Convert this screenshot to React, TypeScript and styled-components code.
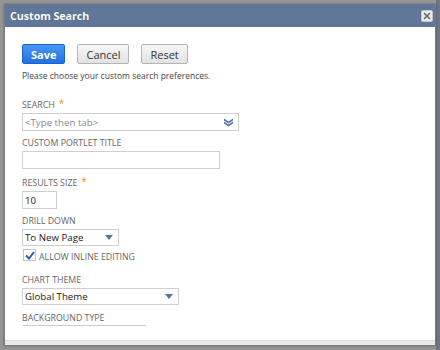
import styled, { createGlobalStyle } from "styled-components";

const GlobalStyle = createGlobalStyle`
  html, body {
    margin: 0;
    padding: 0;
    background: #8d8d8d;
    font-family: "Open Sans", "Liberation Sans", sans-serif;
  }
  * {
    box-sizing: border-box;
  }
`;

const Backdrop = styled.div`
  width: 440px;
  height: 350px;
  padding: 4px;
  background: linear-gradient(to right, #959595 0, #959595 436px, #6f7584 436px);
`;

const Dialog = styled.div`
  width: 432px;
  height: 342px;
  background: #ffffff;
  border: 1px solid #7d7d7d;
  border-top: none;
  display: flex;
  flex-direction: column;
  box-shadow: 0 0 2px rgba(0, 0, 0, 0.35);
`;

const TitleBar = styled.div`
  height: 23px;
  flex: none;
  background: #607799;
  display: flex;
  align-items: center;
  justify-content: space-between;
  padding: 0 2px 0 5px;
`;

const Title = styled.h1`
  margin: 0;
  font-size: 10.8px;
  font-weight: 700;
  color: #ffffff;
  letter-spacing: -0.1px;
  text-shadow: 0 0 1px rgba(0, 0, 0, 0.4);
`;

const CloseButton = styled.button`
  width: 12px;
  height: 12px;
  padding: 0;
  border: 1px solid #c8c8c8;
  border-radius: 2px;
  background: #ececec;
  display: flex;
  align-items: center;
  justify-content: center;
`;

const Body = styled.div`
  flex: 1;
  padding: 17px 17px 0 17px;
  display: flex;
  flex-direction: column;
  align-items: flex-start;
`;

const Footer = styled.div`
  height: 5px;
  flex: none;
  background: #e9e9e9;
  border-top: 1px solid #dcdcdc;
`;

const ButtonRow = styled.div`
  display: flex;
  gap: 12px;
`;

const Button = styled.button<{ $primary?: boolean }>`
  height: 20px;
  padding: 0 8px;
  font-family: "Open Sans", "Liberation Sans", sans-serif;
  font-size: 11px;
  font-weight: ${(p) => (p.$primary ? 700 : 400)};
  color: ${(p) => (p.$primary ? "#ffffff" : "#333333")};
  border-radius: 2px;
  border: 1px solid ${(p) => (p.$primary ? "#1f63c8" : "#b4b4b4")};
  background: ${(p) =>
    p.$primary
      ? "linear-gradient(#4996f4, #1f72e4)"
      : "linear-gradient(#f7f7f7, #e2e2e2)"};
`;

const Intro = styled.p`
  margin: 6px 0 0 0;
  font-size: 8.5px;
  line-height: 12px;
  color: #444444;
`;

const Field = styled.div<{ $top: number }>`
  margin-top: ${(p) => p.$top}px;
  display: flex;
  flex-direction: column;
  align-items: flex-start;
`;

const Label = styled.label`
  font-size: 8.8px;
  color: #666666;
  text-transform: uppercase;
  line-height: 12px;
  height: 12px;
  margin-bottom: 2px;
  display: flex;
  align-items: flex-start;
`;

const Required = styled.span`
  color: #e49a1c;
  font-size: 10px;
  margin-left: 4px;
  line-height: 9px;
`;

const TextInput = styled.div<{ $width: number; $height?: number }>`
  width: ${(p) => p.$width}px;
  height: ${(p) => p.$height ?? 18}px;
  border: 1px solid #cfcfcf;
  background: #ffffff;
  display: flex;
  align-items: center;
  justify-content: space-between;
  padding: 0 5px 0 2px;
  font-size: 9.7px;
  color: #222222;
`;

const Placeholder = styled.span`
  color: #8a8a8a;
`;

const CheckRow = styled.div`
  margin-top: 3px;
  height: 12px;
  display: flex;
  align-items: center;
  gap: 3px;
  font-size: 8.8px;
  color: #666666;
`;

const CheckText = styled.span`
  padding-top: 4px;
`;

const CheckBox = styled.span`
  width: 13px;
  height: 12px;
  margin-left: 1px;
  border: 1px solid #c4c4c4;
  background: #ffffff;
  display: flex;
  align-items: center;
  justify-content: center;
`;

const Underline = styled.div`
  width: 124px;
  height: 1px;
  background: #cccccc;
  margin-top: -1px;
`;

const SelectArrow = () => (
  <svg width="8" height="5" viewBox="0 0 8 5">
    <path d="M0 0 H8 L4 5 Z" fill="#56729e" />
  </svg>
);

const DoubleChevron = () => (
  <svg width="9" height="9" viewBox="0 0 9 9">
    <path d="M0 0.5 L4.5 3.5 L9 0.5 V2.5 L4.5 5.5 L0 2.5 Z" fill="#5b70a0" />
    <path d="M0 3.5 L4.5 6.5 L9 3.5 V5.5 L4.5 8.5 L0 5.5 Z" fill="#5b70a0" />
  </svg>
);

function App() {
  return (
    <>
      <GlobalStyle />
      <Backdrop>
        <Dialog>
          <TitleBar>
            <Title>Custom Search</Title>
            <CloseButton>
              <svg width="8" height="8" viewBox="0 0 8 8">
                <path d="M1 1 L7 7 M7 1 L1 7" stroke="#666" strokeWidth="1.5" />
              </svg>
            </CloseButton>
          </TitleBar>
          <Body>
            <ButtonRow>
              <Button $primary>Save</Button>
              <Button>Cancel</Button>
              <Button>Reset</Button>
            </ButtonRow>
            <Intro>Please choose your custom search preferences.</Intro>

            <Field $top={17}>
              <Label>
                Search<Required>*</Required>
              </Label>
              <TextInput $width={217}>
                <Placeholder>&lt;Type then tab&gt;</Placeholder>
                <DoubleChevron />
              </TextInput>
            </Field>

            <Field $top={6}>
              <Label>Custom Portlet Title</Label>
              <TextInput $width={198} />
            </Field>

            <Field $top={8}>
              <Label>
                Results Size<Required>*</Required>
              </Label>
              <TextInput $width={35}>10</TextInput>
            </Field>

            <Field $top={6}>
              <Label>Drill Down</Label>
              <TextInput $width={97} $height={17}>
                To New Page
                <SelectArrow />
              </TextInput>
            </Field>

            <CheckRow>
              <CheckBox>
                <svg width="10" height="9" viewBox="0 0 10 9">
                  <path d="M1 4.5 L4 7.5 L9 1" stroke="#2d5ea8" strokeWidth="2" fill="none" />
                </svg>
              </CheckBox>
              <CheckText>ALLOW INLINE EDITING</CheckText>
            </CheckRow>

            <Field $top={13}>
              <Label>Chart Theme</Label>
              <TextInput $width={157} $height={17}>
                Global Theme
                <SelectArrow />
              </TextInput>
            </Field>

            <Field $top={7}>
              <Label>Background Type</Label>
              <Underline />
            </Field>
          </Body>
          <Footer />
        </Dialog>
      </Backdrop>
    </>
  );
}

export default App;
